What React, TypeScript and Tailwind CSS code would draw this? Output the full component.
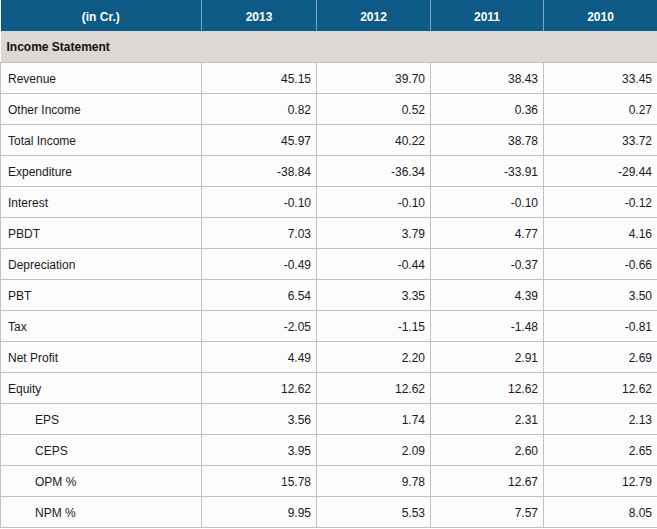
import React from 'react';

const years = ['2013', '2012', '2011', '2010'];

const rows: { label: string; values: string[]; indent?: boolean }[] = [
  { label: 'Revenue', values: ['45.15', '39.70', '38.43', '33.45'] },
  { label: 'Other Income', values: ['0.82', '0.52', '0.36', '0.27'] },
  { label: 'Total Income', values: ['45.97', '40.22', '38.78', '33.72'] },
  { label: 'Expenditure', values: ['-38.84', '-36.34', '-33.91', '-29.44'] },
  { label: 'Interest', values: ['-0.10', '-0.10', '-0.10', '-0.12'] },
  { label: 'PBDT', values: ['7.03', '3.79', '4.77', '4.16'] },
  { label: 'Depreciation', values: ['-0.49', '-0.44', '-0.37', '-0.66'] },
  { label: 'PBT', values: ['6.54', '3.35', '4.39', '3.50'] },
  { label: 'Tax', values: ['-2.05', '-1.15', '-1.48', '-0.81'] },
  { label: 'Net Profit', values: ['4.49', '2.20', '2.91', '2.69'] },
  { label: 'Equity', values: ['12.62', '12.62', '12.62', '12.62'] },
  { label: 'EPS', values: ['3.56', '1.74', '2.31', '2.13'], indent: true },
  { label: 'CEPS', values: ['3.95', '2.09', '2.60', '2.65'], indent: true },
  { label: 'OPM %', values: ['15.78', '9.78', '12.67', '12.79'], indent: true },
  { label: 'NPM %', values: ['9.95', '5.53', '7.57', '8.05'], indent: true },
];

const App = () => {
  return (
    <div className="w-[657px] h-[529px] overflow-hidden bg-white font-['Liberation_Sans',Arial,sans-serif] text-[12px]">
      <table className="w-[657px] border-collapse table-fixed">
        <colgroup>
          <col className="w-[201px]" />
          <col className="w-[115px]" />
          <col className="w-[114px]" />
          <col className="w-[113px]" />
          <col className="w-[114px]" />
        </colgroup>
        <thead>
          <tr className="h-[31px] bg-[#0d5a86] text-white font-bold">
            <th className="border-r border-[#7fa6bf] text-center pt-[2px]">(in Cr.)</th>
            {years.map((y) => (
              <th key={y} className="border-r border-[#7fa6bf] text-center pt-[2px]">{y}</th>
            ))}
          </tr>
        </thead>
        <tbody>
          <tr className="h-[31px] bg-[#dcd8d5] border-b border-[#c4c0bd]">
            <td colSpan={5} className="pl-[6px] pt-[2px] font-bold text-[#111]">Income Statement</td>
          </tr>
          {rows.map((r) => (
            <tr key={r.label} className="h-[31px] bg-[#fcfcfc] border-b border-[#c4c0bd] text-[#1a1a1a]">
              <td className={`border-l border-r border-[#c4c0bd] pt-[2px] ${r.indent ? 'pl-[34px]' : 'pl-[7px]'}`}>{r.label}</td>
              {r.values.map((v, i) => (
                <td key={i} className="border-r border-[#c4c0bd] text-right pr-[5px] pt-[2px]">{v}</td>
              ))}
            </tr>
          ))}
        </tbody>
      </table>
    </div>
  );
};

export default App;
